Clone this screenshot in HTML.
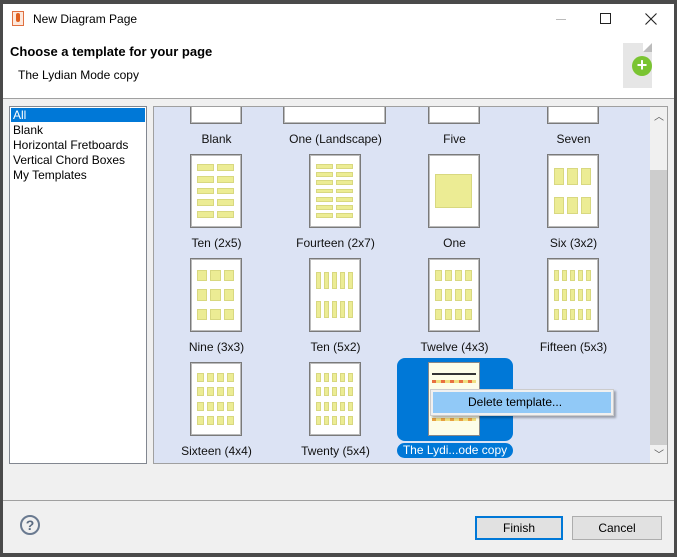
<!DOCTYPE html><html><head><style>
*{box-sizing:border-box;margin:0;padding:0}
body{width:677px;height:557px;background:#4a4a4a;font-family:"Liberation Sans",sans-serif;font-size:12px;color:#000;position:relative;overflow:hidden}
.win{position:absolute;left:3px;top:4px;width:671px;height:549px;background:#f0f0f0}
.abs{position:absolute}
.th{position:absolute;background:#fff;border:1px solid #7a7a7a;box-shadow:0 0 0 1px #bbb inset}
.lbl{position:absolute;width:119px;text-align:center;font-size:12px;color:#111}
.y{position:absolute;background:#ecec94;border:1px solid #d8d880}
</style></head><body>
<div class="win">
 <div class="abs" style="left:0;top:0;width:671px;height:94px;background:#fff"></div>
 <div class="abs" style="left:9px;top:7px;width:12px;height:15px;border:1px solid #e07040;background:#fde8dc"></div>
 <div class="abs" style="left:13px;top:9px;width:4px;height:9px;background:#e06020;border-radius:2px"></div>
 <div class="abs" style="left:30px;top:8px;font-size:12px">New Diagram Page</div>
 <div class="abs" style="left:553px;top:15px;width:10px;height:1px;background:#bbb"></div>
 <div class="abs" style="left:597px;top:9px;width:11px;height:11px;border:1px solid #222"></div>
 <svg class="abs" style="left:642px;top:9px" width="12" height="12"><path d="M0.5 0.5L11.5 11.5M11.5 0.5L0.5 11.5" stroke="#222" stroke-width="1.1"/></svg>
 <div class="abs" style="left:7px;top:40px;font-size:13px;font-weight:bold">Choose a template for your page</div>
 <div class="abs" style="left:15px;top:64px;font-size:12px">The Lydian Mode copy</div>
 <div class="abs" style="left:620px;top:39px;width:29px;height:45px;background:#e6e6e6"></div>
 <div class="abs" style="left:640px;top:39px;width:0;height:0;border-left:9px solid #fff;border-bottom:9px solid #bcbcbc"></div>
 <div class="abs" style="left:629px;top:52px;width:20px;height:20px;border-radius:50%;background:#7ac432;color:#fff;font-weight:bold;font-size:18px;line-height:19px;text-align:center">+</div>
 <div class="abs" style="left:0;top:94px;width:671px;height:1px;background:#a0a0a0"></div>

 <div class="abs" style="left:6px;top:102px;width:138px;height:358px;background:#fff;border:1px solid #828790">
  <div style="margin:1px;background:#0078d7;color:#fff;height:14px;line-height:14px;padding-left:2px">All</div>
  <div style="padding-left:3px;line-height:15px">Blank<br>Horizontal Fretboards<br>Vertical Chord Boxes<br>My Templates</div>
 </div>
 <div class="abs" id="p" style="left:150px;top:102px;width:515px;height:358px;background:#dce3f4;border:1px solid #a0a0a0;overflow:hidden"></div>
 <div class="abs" style="left:647px;top:103px;width:17px;height:356px;background:#f0f0f0"></div>
 <div class="abs" style="left:647px;top:166px;width:17px;height:275px;background:#cdcdcd"></div>
 <div class="abs" style="left:651px;top:104px;font-size:10px;color:#555">︿</div>
 <div class="abs" style="left:651px;top:442px;font-size:10px;color:#555">﹀</div>

 <div class="abs" style="left:0;top:496px;width:671px;height:1px;background:#a0a0a0"></div>
 <div class="abs" style="left:17px;top:511px;width:20px;height:20px;border-radius:50%;border:2px solid #6a7a90;color:#5a6a80;font-weight:bold;font-size:14px;text-align:center;line-height:16px">?</div>
 <div class="abs" style="left:472px;top:512px;width:88px;height:24px;border:2px solid #0078d7;background:#e1e1e1;text-align:center;line-height:20px">Finish</div>
 <div class="abs" style="left:569px;top:512px;width:90px;height:24px;border:1px solid #adadad;background:#e1e1e1;text-align:center;line-height:22px">Cancel</div>
</div>
<script>
var p=document.getElementById('p');
function add(h){p.insertAdjacentHTML('beforeend',h)}
function T(x,y,w,h,g){add('<div class="th" style="left:'+(x-154)+'px;top:'+(y-107)+'px;width:'+w+'px;height:'+h+'px"></div>');
 if(g){var c=g[0],r=g[1],ix=x+6,iy=y+8,iw=w-12,ih=h-16,gw=iw/c,gh=ih/r;
  for(var i=0;i<c;i++)for(var j=0;j<r;j++)add('<div class="y" style="left:'+(ix+i*gw+1-154)+'px;top:'+(iy+j*gh+gh*0.2-107)+'px;width:'+(gw-3)+'px;height:'+(gh*0.6)+'px"></div>');}}
function L(cx,y,t){add('<div class="lbl" style="left:'+(cx-59-154)+'px;top:'+(y-107)+'px">'+t+'</div>')}
T(190,50,52,74);T(283,50,103,74);T(428,50,52,74,[1,1]);T(547,50,52,74,[1,1]);
L(216,132,'Blank');L(335,132,'One (Landscape)');L(454,132,'Five');L(573,132,'Seven');
T(190,154,52,74,[2,5]);T(309,154,52,74,[2,7]);T(428,154,52,74,[1,1]);T(547,154,52,74,[3,2]);
L(216,236,'Ten (2x5)');L(335,236,'Fourteen (2x7)');L(454,236,'One');L(573,236,'Six (3x2)');
T(190,258,52,74,[3,3]);T(309,258,52,74,[5,2]);T(428,258,52,74,[4,3]);T(547,258,52,74,[5,3]);
L(216,340,'Nine (3x3)');L(335,340,'Ten (5x2)');L(454,340,'Twelve (4x3)');L(573,340,'Fifteen (5x3)');
T(190,362,52,74,[4,4]);T(309,362,52,74,[5,4]);
L(216,444,'Sixteen (4x4)');L(335,444,'Twenty (5x4)');
add('<div style="position:absolute;left:'+(397-154)+'px;top:'+(358-107)+'px;width:116px;height:83px;background:#0078d7;border-radius:8px"></div>');
add('<div style="position:absolute;left:'+(428-154)+'px;top:'+(362-107)+'px;width:52px;height:74px;background:#fdfde8;border:1px solid #888"></div>');
add('<div style="position:absolute;left:'+(432-154)+'px;top:'+(373-107)+'px;width:44px;height:2px;background:#333"></div>');
add('<div style="position:absolute;left:'+(432-154)+'px;top:'+(380-107)+'px;width:44px;height:3px;background:repeating-linear-gradient(90deg,#e87040 0 4px,#f0e080 4px 9px)"></div>');
add('<div style="position:absolute;left:'+(432-154)+'px;top:'+(418-107)+'px;width:44px;height:3px;background:repeating-linear-gradient(90deg,#e8a040 0 4px,#f0e080 4px 9px)"></div>');
add('<div style="position:absolute;left:'+(397-154)+'px;top:'+(443-107)+'px;width:116px;height:15px;background:#0078d7;border-radius:8px;color:#fff;text-align:center;line-height:15px">The Lydi...ode copy</div>');
add('<div style="position:absolute;left:'+(430-154)+'px;top:'+(389-107)+'px;width:184px;height:27px;background:#f0f0f0;border:1px solid #ccc;box-shadow:2px 2px 2px rgba(0,0,0,.3)"><div style="margin:2px;height:21px;background:#91c9f7;padding-left:35px;line-height:21px">Delete template...</div></div>');
</script>
</body></html>
